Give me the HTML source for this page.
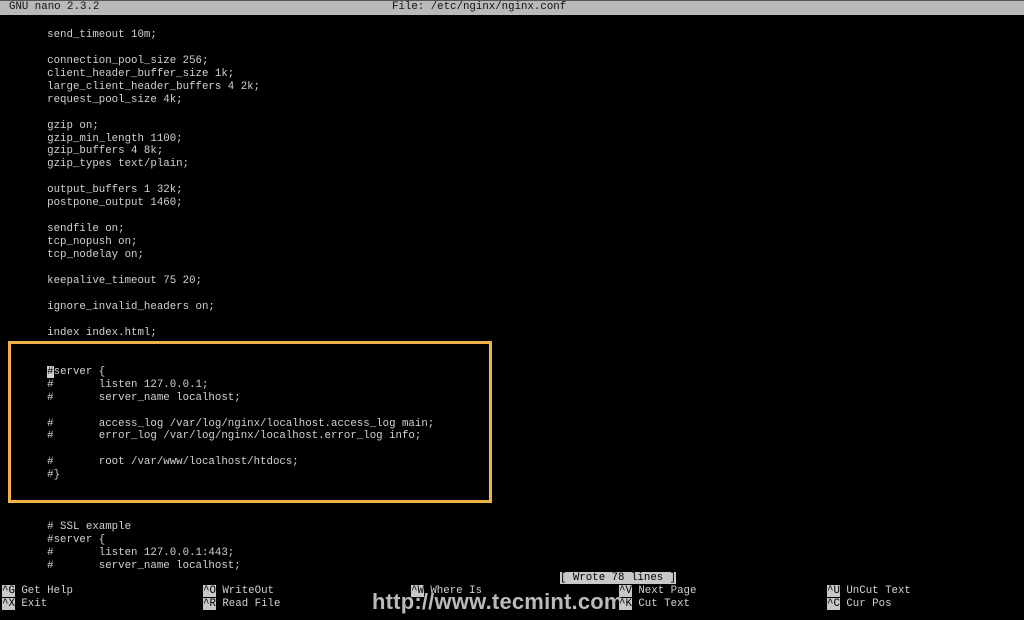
<!DOCTYPE html>
<html><head><style>
body{margin:0;width:1024px;height:620px;background:#000;overflow:hidden;position:relative;font-family:"Liberation Mono","DejaVu Sans Mono",monospace;font-size:10.75px;color:#d2d2d2}
.t{position:absolute;white-space:pre;line-height:13px}
#title{position:absolute;left:0;top:0;width:1024px;height:15px;background:#b9b9b9;border-top:1px solid #555;box-sizing:border-box}
#title span{position:absolute;top:0;color:#111;white-space:pre;line-height:13px}
pre{margin:0;position:absolute;left:2px;top:3px;font:inherit;line-height:12.95px;color:#d2d2d2}
.k{background:#c8c8c8;color:#000}
.box{position:absolute;left:8px;top:341px;width:478px;height:156px;border:3px solid #efb24a}
.wm{position:absolute;left:372px;top:589px;font-family:"Liberation Sans",sans-serif;font-weight:bold;font-size:22px;color:#cfcfcf;letter-spacing:0.2px;opacity:.9}
.cur{background:#d2d2d2;color:#000}
</style></head><body>
<div id="title"><span style="left:9px">GNU nano 2.3.2</span><span style="left:392px">File: /etc/nginx/nginx.conf</span></div>
<pre>


       send_timeout 10m;

       connection_pool_size 256;
       client_header_buffer_size 1k;
       large_client_header_buffers 4 2k;
       request_pool_size 4k;

       gzip on;
       gzip_min_length 1100;
       gzip_buffers 4 8k;
       gzip_types text/plain;

       output_buffers 1 32k;
       postpone_output 1460;

       sendfile on;
       tcp_nopush on;
       tcp_nodelay on;

       keepalive_timeout 75 20;

       ignore_invalid_headers on;

       index index.html;


       <span class="cur">#</span>server {
       #       listen 127.0.0.1;
       #       server_name localhost;

       #       access_log /var/log/nginx/localhost.access_log main;
       #       error_log /var/log/nginx/localhost.error_log info;

       #       root /var/www/localhost/htdocs;
       #}



       # SSL example
       #server {
       #       listen 127.0.0.1:443;
       #       server_name localhost;
</pre>
<div class="box"></div>
<div class="t" style="left:560px;top:572px"><span class="k">[ Wrote 78 lines ]</span></div>
<div class="wm">http://www.tecmint.com</div>
<div class="t" style="left:2px;top:585px"><span class="k">^G</span> Get Help</div>
<div class="t" style="left:2px;top:598px"><span class="k">^X</span> Exit</div>
<div class="t" style="left:203px;top:585px"><span class="k">^O</span> WriteOut</div>
<div class="t" style="left:203px;top:598px"><span class="k">^R</span> Read File</div>
<div class="t" style="left:411px;top:585px"><span class="k">^W</span> Where Is</div>
<div class="t" style="left:619px;top:585px"><span class="k">^V</span> Next Page</div>
<div class="t" style="left:619px;top:598px"><span class="k">^K</span> Cut Text</div>
<div class="t" style="left:827px;top:585px"><span class="k">^U</span> UnCut Text</div>
<div class="t" style="left:827px;top:598px"><span class="k">^C</span> Cur Pos</div>
</body></html>
